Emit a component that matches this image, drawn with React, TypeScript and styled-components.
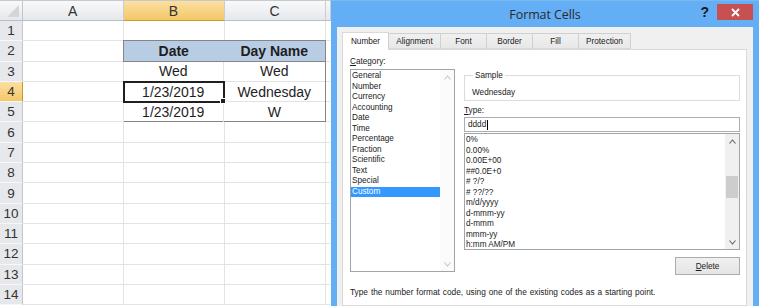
import React from 'react';
import styled, { createGlobalStyle } from 'styled-components';

const GlobalStyle = createGlobalStyle`
  html, body {
    margin: 0;
    padding: 0;
    background: #fff;
    overflow: hidden;
  }
`;

const ROWS = 14;
const SELECTED_ROW = 4;

const categories = [
  'General', 'Number', 'Currency', 'Accounting', 'Date', 'Time',
  'Percentage', 'Fraction', 'Scientific', 'Text', 'Special', 'Custom',
];

const formats = [
  '0%', '0.00%', '0.00E+00', '##0.0E+0', '# ?/?', '# ??/??',
  'm/d/yyyy', 'd-mmm-yy', 'd-mmm', 'mmm-yy', 'h:mm AM/PM',
];

const tabs = ['Number', 'Alignment', 'Font', 'Border', 'Fill', 'Protection'];
const tabWidths = [47, 53, 47, 47, 47, 53];

export default function App() {
  return (
    <>
      <GlobalStyle />
      <Page>
        <Sheet>
          <Corner>
            <svg width="12" height="12" viewBox="0 0 12 12">
              <polygon points="12,0 12,12 0,12" fill="#d3d5d8" />
            </svg>
          </Corner>
          <ColHead>A</ColHead>
          <ColHead $active>B</ColHead>
          <ColHead>C</ColHead>
          <ColHead $blank />

          {Array.from({ length: ROWS }, (_, i) => {
            const r = i + 1;
            const inTable = r >= 2 && r <= 5;
            return (
              <React.Fragment key={r}>
                <RowHead $active={r === SELECTED_ROW}>{r}</RowHead>
                <Cell />
                {r === 2 && (
                  <DataTable>
                    <THead>Date</THead>
                    <THead>Day Name</THead>
                    <TCell>Wed</TCell>
                    <TCell $last>Wed</TCell>
                    <TCell $active>1/23/2019</TCell>
                    <TCell $last>Wednesday</TCell>
                    <TCell $bottom>1/23/2019</TCell>
                    <TCell $bottom $last>W</TCell>
                  </DataTable>
                )}
                {!inTable && <Cell />}
                {!inTable && <Cell />}
                <Cell $narrow />
              </React.Fragment>
            );
          })}
        </Sheet>

        <Dialog>
          <TitleBar>
            <span />
            <Title>Format Cells</Title>
            <TitleButtons>
              <Help>?</Help>
              <Close>
                <svg width="9" height="9" viewBox="0 0 9 9">
                  <path d="M1 1 L8 8 M8 1 L1 8" stroke="#fff" strokeWidth="1.8" />
                </svg>
              </Close>
            </TitleButtons>
          </TitleBar>

          <Body>
            <TabStrip>
              {tabs.map((t, i) => (
                <Tab key={t} $active={i === 0} style={{ width: tabWidths[i] }}>
                  {t}
                </Tab>
              ))}
            </TabStrip>

            <Pane>
              <Columns>
                <LeftCol>
                  <Label>
                    <u>C</u>ategory:
                  </Label>
                  <ListBox $height={203}>
                    <Items>
                      {categories.map((c) => (
                        <Item key={c} $selected={c === 'Custom'}>
                          {c}
                        </Item>
                      ))}
                    </Items>
                    <ScrollBar $disabled>
                      <Arrow $disabled>
                        <Chevron up />
                      </Arrow>
                      <Track />
                      <Arrow $disabled>
                        <Chevron />
                      </Arrow>
                    </ScrollBar>
                  </ListBox>
                </LeftCol>

                <RightCol>
                  <Group>
                    <legend>Sample</legend>
                    Wednesday
                  </Group>
                  <TypeLabel>
                    <u>T</u>ype:
                  </TypeLabel>
                  <TextBox>
                    dddd<Caret />
                  </TextBox>
                  <ListBox $height={117}>
                    <Items>
                      {formats.map((f) => (
                        <Item key={f}>{f}</Item>
                      ))}
                    </Items>
                    <ScrollBar>
                      <Arrow>
                        <Chevron up />
                      </Arrow>
                      <Track>
                        <Thumb />
                      </Track>
                      <Arrow>
                        <Chevron />
                      </Arrow>
                    </ScrollBar>
                  </ListBox>
                  <ButtonRow>
                    <Button>
                      <u>D</u>elete
                    </Button>
                  </ButtonRow>
                </RightCol>
              </Columns>
              <Hint>
                Type the number format code, using one of the existing codes as a starting point.
              </Hint>
            </Pane>
          </Body>
        </Dialog>
        <Rest />
      </Page>
    </>
  );
}

function Chevron({ up }: { up?: boolean }) {
  return (
    <svg width="7" height="5" viewBox="0 0 7 5">
      <polyline
        points={up ? '0.5,4.5 3.5,1 6.5,4.5' : '0.5,0.5 3.5,4 6.5,0.5'}
        fill="none"
        stroke="currentColor"
        strokeWidth="1.1"
      />
    </svg>
  );
}

/* ---------- spreadsheet ---------- */

const Page = styled.div`
  width: 768px;
  height: 306px;
  display: flex;
  overflow: hidden;
  background: #fff;
`;

const Sheet = styled.div`
  width: 331px;
  flex: none;
  display: grid;
  grid-template-columns: 23px 100.5px 101px 101px 5.5px;
  grid-template-rows: 20px repeat(14, 20.3px);
  font-family: 'Liberation Sans', Arial, sans-serif;
  color: #222;
  border-top: 1px solid #c9c9c9;
  box-sizing: border-box;
`;

const headerBg = 'linear-gradient(#f8f9fa, #e5e8ec)';
const activeBg = 'linear-gradient(#fbe0a4, #f3c765)';

const Corner = styled.div`
  background: ${headerBg};
  border-right: 1px solid #c3c7cc;
  border-bottom: 1px solid #b9bec5;
  display: flex;
  align-items: flex-end;
  justify-content: flex-end;
  padding: 0 3px 3px 0;
`;

const ColHead = styled.div<{ $active?: boolean; $blank?: boolean }>`
  background: ${(p) => (p.$active ? activeBg : headerBg)};
  border-right: 1px solid #c9cdd2;
  border-bottom: 1px solid ${(p) => (p.$active ? '#c69a3a' : '#b9bec5')};
  display: flex;
  align-items: center;
  justify-content: center;
  font-size: 14px;
  color: #333;
  padding-top: 1px;
`;

const RowHead = styled.div<{ $active?: boolean }>`
  background: ${(p) => (p.$active ? activeBg : '#e6e8eb')};
  border-right: 1px solid ${(p) => (p.$active ? '#c69a3a' : '#c3c7cc')};
  border-bottom: 1px solid #f6f7f8;
  display: flex;
  align-items: center;
  justify-content: center;
  font-size: 13.5px;
  color: #333;
`;

const Cell = styled.div<{ $narrow?: boolean }>`
  border-right: 1px solid ${(p) => (p.$narrow ? 'transparent' : '#e2e3e5')};
  border-bottom: 1px solid #e2e3e5;
`;

const DataTable = styled.div`
  grid-column: 3 / span 2;
  grid-row: 3 / span 4;
  display: grid;
  grid-template-columns: 1fr 1fr;
  grid-template-rows: 20.3px 20.3px 20.3px 20.3px;
  border: 1.5px solid #858585;
  margin: -1px 0 0 -1px;
  box-sizing: border-box;
`;

const THead = styled.div`
  background: #b8cce4;
  border-bottom: 1.5px solid #858585;
  font-weight: bold;
  font-size: 14px;
  display: flex;
  align-items: center;
  justify-content: center;
  color: #1e1e1e;
`;

const TCell = styled.div<{ $last?: boolean; $bottom?: boolean; $active?: boolean }>`
  position: relative;
  font-size: 14px;
  display: flex;
  align-items: center;
  justify-content: center;
  border-right: ${(p) => (p.$last ? 'none' : '1px solid #e2e3e5')};
  border-bottom: ${(p) => (p.$bottom ? 'none' : '1px solid #e2e3e5')};
  color: #1e1e1e;
  ${(p) =>
    p.$active &&
    `
    outline: 2px solid #1f1f1f;
    outline-offset: -1px;
    z-index: 1;
    &::after {
      content: '';
      position: absolute;
      right: -3px;
      bottom: -3px;
      width: 4px;
      height: 4px;
      background: #1f1f1f;
      border: 1px solid #fff;
    }
  `}
`;

/* ---------- dialog ---------- */

const Dialog = styled.div`
  width: 428px;
  flex: none;
  background: #63aef5;
  display: flex;
  flex-direction: column;
  padding: 0 6px;
  box-sizing: border-box;
  border-top: 1px solid #7bb9f0;
  font-family: 'Liberation Sans', Arial, sans-serif;
`;

const Rest = styled.div`
  flex: 1;
  background: #fff;
`;

const TitleBar = styled.div`
  height: 26px;
  display: grid;
  grid-template-columns: 1fr auto 1fr;
  align-items: start;
`;

const Title = styled.div`
  font-family: 'Open Sans', 'Noto Sans', sans-serif;
  font-size: 12.5px;
  color: #2b2b2b;
  padding-top: 5px;
  letter-spacing: -0.1px;
`;

const TitleButtons = styled.div`
  justify-self: end;
  display: flex;
  align-items: flex-start;
  gap: 8px;
`;

const Help = styled.div`
  font-family: 'Liberation Sans', Arial, sans-serif;
  font-weight: bold;
  font-size: 14px;
  color: #1a1a1a;
  padding-top: 3px;
`;

const Close = styled.div`
  width: 36px;
  height: 16px;
  margin-top: 3px;
  background: #c75050;
  display: flex;
  align-items: center;
  justify-content: center;
`;

const Body = styled.div`
  flex: 1;
  background: #f0f0f0;
  padding: 5px 6px 0 5px;
  display: flex;
  flex-direction: column;
`;

const TabStrip = styled.div`
  display: flex;
  align-items: flex-end;
  height: 17px;
  padding-left: 1px;
  position: relative;
  z-index: 1;
`;

const Tab = styled.div<{ $active?: boolean }>`
  box-sizing: border-box;
  height: ${(p) => (p.$active ? 18 : 16)}px;
  margin-bottom: ${(p) => (p.$active ? -1 : 0)}px;
  background: ${(p) => (p.$active ? '#fff' : 'linear-gradient(#f0f0f0, #e8e8e8)')};
  border: 1px solid ${(p) => (p.$active ? '#d9d9d9' : '#d0d0d0')};
  border-bottom: ${(p) => (p.$active ? 'none' : '1px solid #d9d9d9')};
  margin-left: -1px;
  font-size: 8.2px;
  color: #1a1a1a;
  display: flex;
  align-items: center;
  justify-content: center;
  padding-top: ${(p) => (p.$active ? 0 : 1)}px;
`;

const Pane = styled.div`
  flex: 1;
  background: #fff;
  border: 1px solid #d9d9d9;
  padding: 6px 6px 0 7px;
  font-size: 8.2px;
  color: #1a1a1a;
`;

const Columns = styled.div`
  display: grid;
  grid-template-columns: 105px 1fr;
  column-gap: 9px;
`;

const LeftCol = styled.div`
  display: flex;
  flex-direction: column;
`;

const RightCol = styled.div`
  display: flex;
  flex-direction: column;
  padding-top: 14px;
`;

const Label = styled.div`
  line-height: 11px;
  margin-bottom: 2px;
`;

const TypeLabel = styled(Label)`
  margin: 4px 0 1px;
`;

const ListBox = styled.div<{ $height: number }>`
  height: ${(p) => p.$height}px;
  box-sizing: border-box;
  border: 1px solid #a0a4ab;
  display: flex;
  background: #fff;
  overflow: hidden;
`;

const Items = styled.div`
  flex: 1;
  padding-top: 1px;
`;

const Item = styled.div<{ $selected?: boolean }>`
  line-height: 10.5px;
  padding-left: 1px;
  background: ${(p) => (p.$selected ? '#3399ff' : 'transparent')};
  color: ${(p) => (p.$selected ? '#fff' : '#1a1a1a')};
`;

const ScrollBar = styled.div<{ $disabled?: boolean }>`
  width: 14px;
  display: flex;
  flex-direction: column;
  background: ${(p) => (p.$disabled ? '#fbfbfb' : '#f0f0f0')};
`;

const Arrow = styled.div<{ $disabled?: boolean }>`
  height: 14px;
  display: flex;
  align-items: center;
  justify-content: center;
  color: ${(p) => (p.$disabled ? '#c4c4c4' : '#606060')};
`;

const Track = styled.div`
  flex: 1;
  padding-top: 28px;
`;

const Thumb = styled.div`
  height: 22px;
  margin: 0 1px;
  background: #cdcdcd;
`;

const Group = styled.fieldset`
  margin: 0;
  height: 31px;
  box-sizing: border-box;
  border: 1px solid #dcdcdc;
  padding: 6px 7px 0;
  line-height: 11px;

  legend {
    padding: 0 2px;
    margin-left: 1px;
    line-height: 11px;
  }
`;

const TextBox = styled.div`
  height: 15px;
  box-sizing: border-box;
  border: 1px solid #abadb3;
  padding-left: 3px;
  line-height: 13px;
  margin-bottom: 1px;
  display: flex;
  align-items: center;
`;

const Caret = styled.span`
  display: inline-block;
  width: 1px;
  height: 10px;
  background: #000;
  margin-left: 0.5px;
`;

const ButtonRow = styled.div`
  display: flex;
  justify-content: flex-end;
  margin-top: 7px;
`;

const Button = styled.div`
  width: 65px;
  height: 18px;
  box-sizing: border-box;
  border: 1px solid #acacac;
  background: linear-gradient(#f0f0f0, #e5e5e5);
  display: flex;
  align-items: center;
  justify-content: center;
`;

const Hint = styled.div`
  margin-top: 12px;
  line-height: 11px;
  font-size: 8.3px;
  word-spacing: 0.6px;
`;
